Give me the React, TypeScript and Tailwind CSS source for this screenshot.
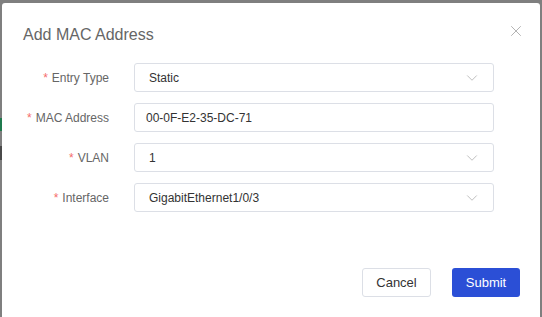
import { X, ChevronDown } from 'lucide-react';

const font = { fontFamily: '"Liberation Sans", Arial, sans-serif' };

type Field = { label: string; value: string; select: boolean };

const fields: Field[] = [
  { label: 'Entry Type', value: 'Static', select: true },
  { label: 'MAC Address', value: '00-0F-E2-35-DC-71', select: false },
  { label: 'VLAN', value: '1', select: true },
  { label: 'Interface', value: 'GigabitEthernet1/0/3', select: true },
];

function Row({ f }: { f: Field }) {
  return (
    <div className="flex items-center">
      <div className="w-[107px] shrink-0 text-right text-[12px] text-[#666]">
        <span className="text-[#f56c6c] mr-[4px]">*</span>
        {f.label}
      </div>
      <div
        className={`ml-[25px] w-[360px] h-[29px] flex items-center justify-between border border-[#dcdfe6] rounded-[3px] bg-white text-[12px] text-[#333] ${
          f.select ? 'pl-[14px] pr-[12px]' : 'pl-[11px]'
        }`}
      >
        <span>{f.value}</span>
        {f.select && <ChevronDown size={18} strokeWidth={1} className="text-[#aaa]" />}
      </div>
    </div>
  );
}

export default function App() {
  return (
    <div className="w-[542px] h-[317px] bg-[#7f7f7f] overflow-hidden relative" style={font}>
      <div className="absolute left-0 top-[118px] w-[2px] h-[13px] bg-[#1f7a4d]" />
      <div className="absolute left-0 top-[146px] w-[2px] h-[14px] bg-[#4a4a4a]" />
      <div className="absolute left-[2px] top-[3px] w-[538px] h-[330px] bg-white rounded-[3px]">
        <div className="flex items-start justify-between pl-[21px] pr-[15px] pt-[18px]">
          <h2 className="text-[16px] leading-[24px] text-[#666] mt-[2px]">Add MAC Address</h2>
          <X size={18} strokeWidth={1} className="text-[#999] mt-[1px]" />
        </div>
        <div className="flex flex-col gap-[11px] mt-[16px]">
          {fields.map((f) => (
            <Row key={f.label} f={f} />
          ))}
        </div>
        <div className="flex justify-end gap-[21px] pr-[20px] mt-[56px]">
          <button className="w-[69px] h-[29px] border border-[#dcdfe6] rounded-[3px] bg-white text-[13px] text-[#333]">
            Cancel
          </button>
          <button className="w-[68px] h-[29px] rounded-[3px] bg-[#2b4fd6] text-[13px] text-white">
            Submit
          </button>
        </div>
      </div>
    </div>
  );
}
